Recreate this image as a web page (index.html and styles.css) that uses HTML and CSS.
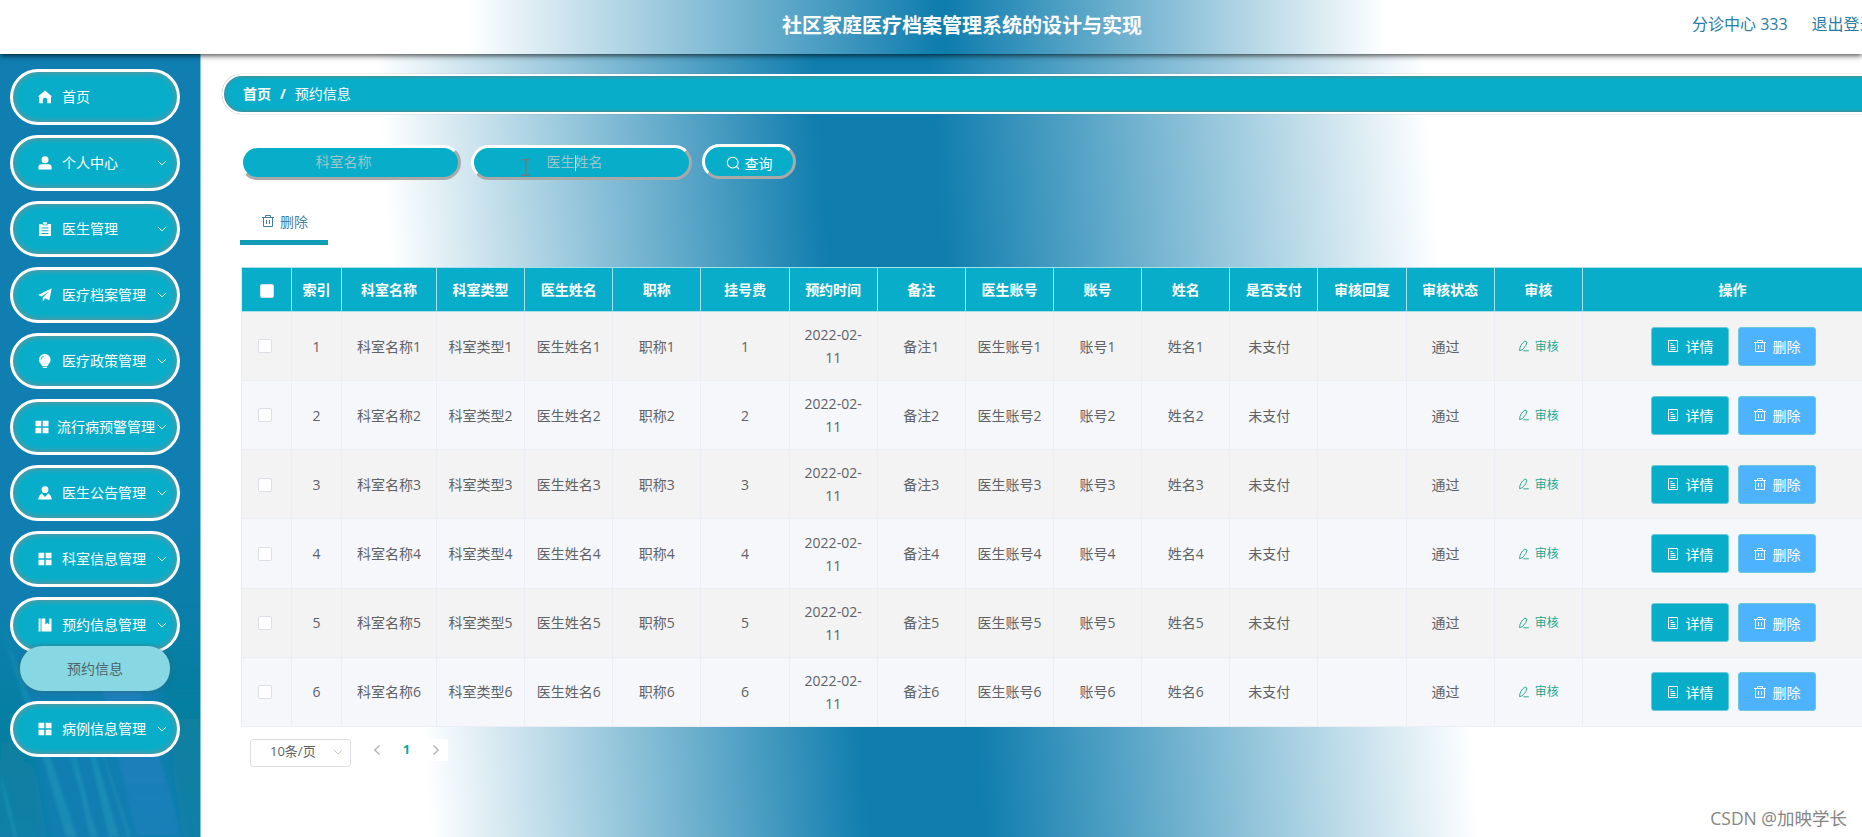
FILE: index.html
```html
<!DOCTYPE html>
<html lang="zh-CN">
  <head>
    <meta charset="UTF-8" />
    <meta name="viewport" content="width=device-width, initial-scale=1.0" />
    <title>社区家庭医疗档案管理系统的设计与实现</title>
    <link rel="stylesheet" href="styles.css">
  </head>
  <body>
    <!-- Icon sprite -->
    <svg class="sprite">
      <symbol id="home" viewBox="0 0 14 14"><path d="M7 .6 13.4 6q.6 1-.4 1.200V12.500q0 .7-.7.700H9.200V9.500Q9 7.800 7 7.800T4.800 9.500V13.200H1.700Q1 13.200 1 12.500V7.200Q0 7 .6 6z" /></symbol>
      <symbol id="user" viewBox="0 0 14 14"><circle cx="7" cy="3.700" r="3.500" /><path d="M.4 13.500V11Q.6 8.300 3.500 8.300h7q2.900 0 3.100 2.700v2.500z" /></symbol>
      <symbol id="order" viewBox="0 0 14 14"><path fill-rule="evenodd" d="M1 2h3.500v1.300h5V2H13v12H1zM3.500 5.500v1h7v-1zm0 2.700v1h7v-1zm0 2.700v1h7v-1z" /><path d="M5.200.2h3.600v2.300H5.200z" /></symbol>
      <symbol id="send" viewBox="0 0 14 14"><path d="M13.800.2 11.300 12.300 7.200 10.200 4.800 13.600V9.400L11.500 3 3.600 8.500.2 6.900z" /></symbol>
      <symbol id="bulb" viewBox="0 0 14 14"><path d="M6.700 0a5.800 5.800 0 0 1 3.800 10.200L9.300 12.300H4.200L3 10.200A5.800 5.800 0 0 1 6.700 0zM4.500 13h4.600l-.5 1H5z" /><path d="M3 5.500Q3.300 2.800 5.800 2.200" fill="none" stroke="#08aec9" stroke-width=".9" /></symbol>
      <symbol id="menu" viewBox="0 0 14 14"><path d="M.5.800h5.800v5.500H.5zM7.700.800h5.800v5.500H7.700zM.5 7.700h5.800v5.500H.5zM7.700 7.700h5.800v5.500H7.700z" /></symbol>
      <symbol id="custom" viewBox="0 0 14 14"><circle cx="7" cy="3.700" r="3.400" /><path d="M3.800 7.500 7 11l3.200-3.500q3.100 1.500 3.600 6H.2q.5-4.500 3.600-6z" /></symbol>
      <symbol id="book" viewBox="0 0 14 14"><path d="M.6.600h2v12.800h-2zM3.500.600h3.800v6l2-1.700 2 1.700v-6h2.200v12.800h-10z" /></symbol>
      <symbol id="down" viewBox="0 0 14 14"><path d="m2.200 4.600 4.800 4.600 4.800-4.600" fill="none" stroke="currentColor" stroke-width="1.100" /></symbol>
      <symbol id="left" viewBox="0 0 14 14"><path d="M9.500 2.500 4.800 7l4.700 4.500" fill="none" stroke="currentColor" stroke-width="1.400" /></symbol>
      <symbol id="right" viewBox="0 0 14 14"><path d="M4.500 2.500 9.200 7l-4.700 4.500" fill="none" stroke="currentColor" stroke-width="1.400" /></symbol>
      <symbol id="search" viewBox="0 0 14 14"><circle cx="6.700" cy="6.600" r="5.400" fill="none" stroke="currentColor" stroke-width="1.100" /><path d="m10.500 10.500 2.600 2.700" stroke="currentColor" stroke-width="1.200" /></symbol>
      <symbol id="trash" viewBox="0 0 14 14"><path d="M1 3.500h12M2.500 3.500v9h9v-9M4.500 3.500v-2h5v2M5.500 6v4M8.500 6v4" fill="none" stroke="currentColor" /></symbol>
      <symbol id="doc" viewBox="0 0 14 14"><path d="M2.500 1.500h9v11h-9zM4.500 4.500h2M4.500 6.500h4M4.500 8.500h5M4.500 10.500h5" fill="none" stroke="currentColor" /></symbol>
      <symbol id="edit" viewBox="0 0 14 14"><path d="M8 1.200 10.500 2.500Q10.500 6 5 11.400l-3.200 1Q2 5.500 8 1.200zM6.200 12.600h6.500" fill="none" stroke="currentColor" stroke-width="1.100" /></symbol>
    </svg>

    <header class="header">
      <h1>社区家庭医疗档案管理系统的设计与实现</h1>
      <div class="user-links">
        <a>分诊中心 333</a>
        <a>退出登录</a>
      </div>
    </header>

    <div class="layout">
      <!-- Side menu -->
      <nav class="sidebar">
        <svg class="streaks" viewBox="0 0 200 320" preserveAspectRatio="none">
          <defs>
            <linearGradient id="fade" x1="0" y1="0" x2="0" y2="1">
              <stop offset="0" stop-color="#1b9fc0" stop-opacity="0" />
              <stop offset=".5" stop-color="#1b9fc0" stop-opacity=".5" />
              <stop offset="1" stop-color="#2a9cbc" stop-opacity=".45" />
            </linearGradient>
            <linearGradient id="dark" x1="0" y1="0" x2="0" y2="1">
              <stop offset="0" stop-color="#087f9c" stop-opacity="0" />
              <stop offset=".6" stop-color="#087f9c" stop-opacity=".8" />
              <stop offset="1" stop-color="#0a7fa6" stop-opacity=".8" />
            </linearGradient>
            <linearGradient id="violet" x1="0" y1="0" x2="0" y2="1">
              <stop offset="0" stop-color="#2b80c4" stop-opacity="0" />
              <stop offset=".5" stop-color="#2b80c4" stop-opacity=".6" />
              <stop offset="1" stop-color="#1c80bc" stop-opacity=".5" />
            </linearGradient>
            <filter id="soft" x="-20%" y="-20%" width="140%" height="140%"><feGaussianBlur stdDeviation="1.5" /></filter>
            <filter id="softer" x="-50%" y="-20%" width="200%" height="140%"><feGaussianBlur stdDeviation="5" /></filter>
          </defs>
          <g filter="url(#softer)">
            <path fill="url(#dark)" d="M-10 60 20 150 50 340H-10z" />
            <path fill="url(#dark)" d="M145 60 210 0V340H185z" />
          </g>
          <g filter="url(#soft)">
            <path fill="url(#violet)" d="M85 100h35l62 220h-45z" />
            <path fill="url(#fade)" d="M0 95 40 210 77 320H66L34 210 0 115z" />
            <path fill="url(#fade)" d="M44 160 98 320h-3zM56 160 96 320h-6zM70 150 119 320h-10zM88 190 131 320h-3z" />
            <path fill="url(#fade)" d="M0 250 17 320h-3L0 262z" />
          </g>
        </svg>
        <ul class="menu">
          <li><a><svg><use href="#home" /></svg>首页</a></li>
          <li><a><svg><use href="#user" /></svg>个人中心<svg class="arrow"><use href="#down" /></svg></a></li>
          <li><a><svg><use href="#order" /></svg>医生管理<svg class="arrow"><use href="#down" /></svg></a></li>
          <li><a><svg><use href="#send" /></svg>医疗档案管理<svg class="arrow"><use href="#down" /></svg></a></li>
          <li><a><svg><use href="#bulb" /></svg>医疗政策管理<svg class="arrow"><use href="#down" /></svg></a></li>
          <li><a class="long"><svg><use href="#menu" /></svg>流行病预警管理<svg class="arrow"><use href="#down" /></svg></a></li>
          <li><a><svg><use href="#custom" /></svg>医生公告管理<svg class="arrow"><use href="#down" /></svg></a></li>
          <li><a><svg><use href="#menu" /></svg>科室信息管理<svg class="arrow"><use href="#down" /></svg></a></li>
          <li>
            <a><svg><use href="#book" /></svg>预约信息管理<svg class="arrow"><use href="#down" /></svg></a>
            <div class="submenu">预约信息</div>
          </li>
          <li><a><svg><use href="#menu" /></svg>病例信息管理<svg class="arrow"><use href="#down" /></svg></a></li>
        </ul>
      </nav>

      <main class="main">
        <div class="breadcrumb"><b>首页</b><b class="slash">/</b><span>预约信息</span></div>

        <!-- Search form -->
        <div class="search">
          <div class="field">科室名称</div>
          <div class="field">
            医生姓名
            <i class="caret"></i>
            <svg class="ibeam" viewBox="0 0 8 17"><path d="M0 .5h3L4 1.500 5 .5h3M0 16.500h3l1-1 1 1h3M4 1v15" fill="none" stroke="#7a7672" stroke-width="1.300" /></svg>
          </div>
          <button class="query"><svg><use href="#search" /></svg>查询</button>
        </div>

        <button class="batch-delete"><svg><use href="#trash" /></svg>删除</button>

        <!-- Data table, rows are filled in below -->
        <table class="table">
          <colgroup>
            <col class="c-small" /><col class="c-small" /><col class="c-name" />
            <col span="13" class="c-data" /><col class="c-action" />
          </colgroup>
          <thead>
            <tr>
              <th><i class="checkbox"></i></th>
              <th>索引</th>
              <th>科室名称</th>
              <th>科室类型</th>
              <th>医生姓名</th>
              <th>职称</th>
              <th>挂号费</th>
              <th>预约时间</th>
              <th>备注</th>
              <th>医生账号</th>
              <th>账号</th>
              <th>姓名</th>
              <th>是否支付</th>
              <th>审核回复</th>
              <th>审核状态</th>
              <th>审核</th>
              <th>操作</th>
            </tr>
          </thead>
          <tbody id="rows"></tbody>
        </table>

        <!-- Pagination -->
        <div class="pagination">
          <div class="page-size">10条/页<svg><use href="#down" /></svg></div>
          <div class="pager">
            <svg><use href="#left" /></svg>
            <b>1</b>
            <svg><use href="#right" /></svg>
          </div>
        </div>
      </main>
    </div>

    <div class="watermark">CSDN @加映学长</div>

    <script>
      let html = "";
      for (let i = 1; i <= 6; i++) {
        html += `
          <tr>
            <td class="check"><i class="checkbox"></i></td>
            <td>${i}</td>
            <td>科室名称${i}</td>
            <td>科室类型${i}</td>
            <td>医生姓名${i}</td>
            <td>职称${i}</td>
            <td>${i}</td>
            <td>2022-02-<br />11</td>
            <td>备注${i}</td>
            <td>医生账号${i}</td>
            <td>账号${i}</td>
            <td>姓名${i}</td>
            <td class="state">未支付</td>
            <td></td>
            <td class="state">通过</td>
            <td><a class="review"><svg><use href="#edit" /></svg>审核</a></td>
            <td>
              <div class="actions">
                <button class="btn detail"><svg><use href="#doc" /></svg>详情</button>
                <button class="btn delete"><svg><use href="#trash" /></svg>删除</button>
              </div>
            </td>
          </tr>`;
      }
      document.getElementById("rows").innerHTML = html;
    </script>
  </body>
</html>
```
FILE: styles.css
```css
* {
  box-sizing: border-box;
}

body {
  margin: 0;
  height: 837px;
  overflow: hidden;
  position: relative;
  font-family: "Open Sans", "Noto Sans CJK SC", sans-serif;
  font-size: 14px;
  line-height: 23px;
  color: #606266;
  background: #fff;
}

button {
  font-family: inherit;
  font-size: 14px;
}

svg {
  width: 14px;
  height: 14px;
  fill: currentColor;
  flex-shrink: 0;
}

.sprite {
  display: none;
}

/* Header */
.header {
  position: relative;
  z-index: 2;
  height: 54px;
  padding-left: 782px;
  display: flex;
  align-items: center;
  background: linear-gradient(90deg, #fff 467px, #0f7dae 938px, #0f7dae 948px, #fff 1386px);
  box-shadow: 0 1px 6px rgba(0, 0, 0, 0.85);
}

.header h1 {
  flex: 0 0 910px;
  margin: 0 0 3px;
  font-size: 20px;
  line-height: 30px;
  color: #fff;
  white-space: nowrap;
}

.user-links {
  display: flex;
  flex-shrink: 0;
  gap: 24px;
  margin-bottom: 6px;
  font-size: 16px;
  color: #2b7da5;
  white-space: nowrap;
}

.layout {
  display: flex;
  height: 783px;
}

/* Side menu */
.sidebar {
  position: relative;
  flex: 0 0 201px;
  background: #107eb0;
  border-right: 1px solid #8dc3d9;
}

.streaks {
  position: absolute;
  left: 0;
  bottom: 0;
  width: 200px;
  height: 320px;
}

.menu {
  position: relative;
  list-style: none;
  margin: 0;
  padding: 15px 20px 0 10px;
}

.menu li {
  margin-bottom: 10px;
}

.menu a {
  display: flex;
  align-items: center;
  gap: 10px;
  height: 56px;
  padding: 0 9px 1px 25px;
  border: 3px solid #fff;
  border-radius: 28px;
  background: #08aec9;
  box-shadow: inset 0 0 6px #888;
  color: #fff;
  white-space: nowrap;
}

.menu .long {
  padding-left: 22px;
  gap: 8px;
}

.menu .arrow {
  margin-left: auto;
  width: 12px;
}

.menu .long .arrow {
  margin-left: -7px;
}

.submenu {
  position: relative;
  width: 150px;
  height: 45px;
  margin: -7px 0 0 10px;
  border-radius: 22px;
  background: #87d8e3;
  box-shadow: 0 0 5px rgba(60, 100, 110, 0.7);
  color: #4f6468;
  line-height: 45px;
  text-align: center;
}

/* Main content */
.main {
  width: 1661px;
  flex-shrink: 0;
  overflow: hidden;
  padding: 20px 0 0 21px;
  background: linear-gradient(86deg, #fff 228px, #0f7dae 667px, #0f7dae 780px, #fff 1276px);
}

.breadcrumb {
  display: flex;
  align-items: center;
  width: 1680px;
  height: 40px;
  padding: 0 0 1px 19px;
  border: 2px solid #fff;
  border-radius: 20px;
  background: #08aec9;
  box-shadow: 0 0 1px #777, inset 0 0 4px #777;
  color: #fff;
}

.breadcrumb .slash {
  margin: 0 9px;
}

/* Search form */
.search {
  display: flex;
  gap: 10px;
  margin: 30px 0 0 18px;
}

.field {
  position: relative;
  width: 221px;
  height: 35px;
  margin-top: 1px;
  border: 3px solid;
  border-color: #fff #a9a9a9 #a9a9a9 #fff;
  border-radius: 18px;
  background: #08aec9;
  padding-right: 14px;
  line-height: 28px;
  text-align: center;
  color: #9cc5cd;
}

.caret {
  position: absolute;
  left: 101px;
  top: 7px;
  width: 1px;
  height: 16px;
  background: #fff;
}

.ibeam {
  position: absolute;
  left: 48px;
  top: 11px;
  width: 8px;
  height: 17px;
}

.query {
  display: flex;
  align-items: center;
  justify-content: center;
  gap: 5px;
  width: 94px;
  height: 35px;
  padding: 3px 0 0;
  border: 3px solid;
  border-color: #fff #a9a9a9 #a9a9a9 #fff;
  border-radius: 18px;
  background: #08aec9;
  color: #fff;
}

.batch-delete {
  display: flex;
  align-items: center;
  gap: 5px;
  width: 88px;
  height: 45px;
  margin: 20px 0 22px 18px;
  padding: 2px 0 0 21px;
  border: 0;
  border-bottom: 5px solid #109db5;
  background: none;
  color: #477f9f;
}

/* Table */
.table {
  width: 1642px;
  margin-left: 19px;
  table-layout: fixed;
  border-collapse: separate;
  border-spacing: 0;
  border-top: 1px solid #a9dfe8;
  border-left: 1px solid #e6e9f4;
}

.c-small {
  width: 50px;
}

.c-name {
  width: 95px;
}

.c-data {
  width: 88.150px;
}

.c-action {
  width: 300px;
}

.table th,
.table td {
  padding: 0;
  text-align: center;
  white-space: nowrap;
  border-right: 1px solid #ebeef5;
  border-bottom: 1px solid #ebeef5;
}

.table th {
  height: 44px;
  background: #08aec9;
  color: #fff;
  border-color: #a9dfe8;
}

.table td {
  height: 69.170px;
  background: #f3f3f3;
}

.table tr:nth-child(even) td {
  background: #f5f7fb;
}

.table td.state {
  padding-right: 9px;
}

.table td.check {
  padding: 0 4px 3px 0;
}

.checkbox {
  display: inline-block;
  width: 14px;
  height: 14px;
  border: 1px solid #dcdfe6;
  border-radius: 2px;
  background: #fff;
  vertical-align: middle;
}

.review {
  display: flex;
  align-items: center;
  justify-content: center;
  gap: 5px;
  font-size: 12px;
  color: #25a78e;
}

.review svg {
  width: 12px;
  height: 12px;
}

.actions {
  display: flex;
  justify-content: center;
  gap: 9px;
  padding-left: 2px;
}

.btn {
  display: flex;
  align-items: center;
  justify-content: center;
  gap: 5px;
  width: 78px;
  height: 39px;
  padding: 0;
  border: 1px solid #6bc9da;
  border-radius: 3px;
  color: #fff;
}

.detail {
  background: #08aec9;
}

.delete {
  background: #4db3ff;
}

/* Pagination */
.pagination {
  display: flex;
  margin: 12px 0 0 28px;
}

.page-size {
  display: flex;
  align-items: center;
  justify-content: space-between;
  width: 101px;
  height: 28px;
  padding: 0 6px 2px 19px;
  border: 1px solid #dcdfe6;
  border-radius: 3px;
  background: #fff;
  font-size: 13px;
}

.page-size svg {
  width: 12px;
  color: #c0c4cc;
}

.pager {
  display: flex;
  align-items: center;
  justify-content: space-between;
  width: 82px;
  height: 22px;
  margin-left: 15px;
  padding: 0 5px 0 4px;
  background: #fff;
  color: #b0b3b8;
}

.pager b {
  font-size: 13px;
  color: #13a89e;
}

/* Watermark */
.watermark {
  position: absolute;
  right: 15px;
  bottom: 7px;
  font-size: 17.500px;
  color: #858585;
  text-shadow: 0 0 2px #fff;
}
```
